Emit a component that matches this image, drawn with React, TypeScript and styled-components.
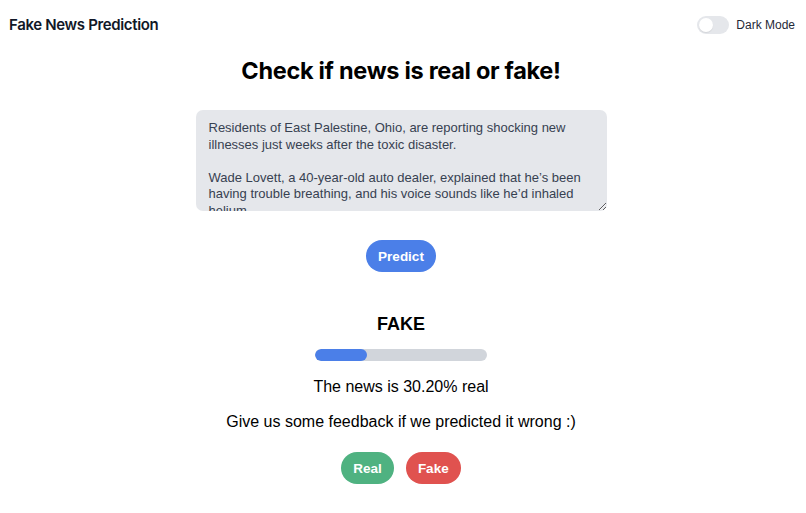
import React, { useState } from 'react'
import styled, { createGlobalStyle } from 'styled-components'

const GlobalStyle = createGlobalStyle`
    html, body {
        margin: 0;
        padding: 0;
        background: #ffffff;
    }
    body {
        font-family: "Liberation Sans", Arial, sans-serif;
        color: #111111;
    }
`

const Page = styled.div`
    display: flex;
    flex-direction: column;
    min-height: 513px;
`

const Header = styled.header`
    display: flex;
    justify-content: space-between;
    align-items: center;
    height: 49px;
    padding: 0 11px 0 9px;
`

const Brand = styled.h1`
    margin: 0;
    font-family: Inter, "Liberation Sans", sans-serif;
    font-size: 15px;
    font-weight: 600;
    letter-spacing: -0.35px;
    color: #111827;
`

const ToggleLabel = styled.label`
    display: flex;
    align-items: center;
    gap: 7px;
    font-size: 12px;
    color: #1f2937;
    cursor: pointer;
`

const Track = styled.span<{ $on: boolean }>`
    position: relative;
    width: 32px;
    height: 18px;
    border-radius: 9px;
    background: ${p => (p.$on ? '#4b7fe8' : '#e5e7eb')};
`

const Knob = styled.span<{ $on: boolean }>`
    position: absolute;
    top: 2px;
    left: ${p => (p.$on ? '16px' : '2px')};
    width: 14px;
    height: 14px;
    border-radius: 50%;
    background: #ffffff;
    box-shadow: 0 1px 1px rgba(0, 0, 0, 0.08);
`

const Main = styled.main`
    display: flex;
    flex-direction: column;
    align-items: center;
    padding-right: 4px;
`

const Title = styled.h2`
    margin: 6px 0 0;
    font-family: Inter, "Liberation Sans", sans-serif;
    font-size: 23.5px;
    font-weight: 700;
    letter-spacing: -0.3px;
    color: #000000;
    line-height: 32px;
`

const NewsInput = styled.textarea`
    box-sizing: border-box;
    margin-top: 23px;
    width: 411px;
    height: 101px;
    padding: 10px 13px;
    border: none;
    border-radius: 7px;
    background: #e5e7eb;
    color: #374151;
    font-family: "Liberation Sans", Arial, sans-serif;
    font-size: 13px;
    line-height: 16.6px;
    resize: vertical;
    outline: none;
    scrollbar-width: none;
    &::-webkit-scrollbar {
        display: none;
    }
`

const PillButton = styled.button<{ $bg: string }>`
    height: 32px;
    padding: 0 12px;
    border: none;
    border-radius: 16px;
    background: ${p => p.$bg};
    color: #ffffff;
    font-family: "Liberation Sans", Arial, sans-serif;
    font-size: 13.5px;
    font-weight: 700;
    cursor: pointer;
`

const PredictButton = styled(PillButton)`
    margin-top: 29px;
`

const Verdict = styled.h3`
    margin: 40px 0 0;
    font-size: 18px;
    font-weight: 700;
    line-height: 24px;
    color: #000000;
`

const Bar = styled.div`
    margin-top: 13px;
    width: 172px;
    height: 12px;
    border-radius: 6px;
    background: #d1d5db;
    overflow: hidden;
`

const BarFill = styled.div`
    height: 100%;
    border-radius: 6px;
    background: #4b7fe8;
`

const Line = styled.p<{ $top: number }>`
    margin: ${p => p.$top}px 0 0;
    font-size: 16px;
    line-height: 22px;
    color: #000000;
`

const FeedbackRow = styled.div`
    display: flex;
    gap: 12px;
    margin-top: 19px;
`

const text = `Residents of East Palestine, Ohio, are reporting shocking new illnesses just weeks after the toxic disaster.

Wade Lovett, a 40-year-old auto dealer, explained that he’s been having trouble breathing, and his voice sounds like he’d inhaled helium.`

export default function App() {
    const [dark, setDark] = useState(false)
    const [news, setNews] = useState(text)
    const realness = 30.2

    return (
        <>
            <GlobalStyle />
            <Page>
                <Header>
                    <Brand>Fake News Prediction</Brand>
                    <ToggleLabel onClick={() => setDark(!dark)}>
                        <Track $on={dark}>
                            <Knob $on={dark} />
                        </Track>
                        Dark Mode
                    </ToggleLabel>
                </Header>
                <Main>
                    <Title>Check if news is real or fake!</Title>
                    <NewsInput value={news} onChange={e => setNews(e.target.value)} />
                    <PredictButton $bg="#4b7fe8">Predict</PredictButton>
                    <Verdict>FAKE</Verdict>
                    <Bar>
                        <BarFill style={{ width: `${realness}%` }} />
                    </Bar>
                    <Line $top={15}>The news is {realness.toFixed(2)}% real</Line>
                    <Line $top={13}>Give us some feedback if we predicted it wrong :)</Line>
                    <FeedbackRow>
                        <PillButton $bg="#4fb281">Real</PillButton>
                        <PillButton $bg="#e0524f">Fake</PillButton>
                    </FeedbackRow>
                </Main>
            </Page>
        </>
    )
}
